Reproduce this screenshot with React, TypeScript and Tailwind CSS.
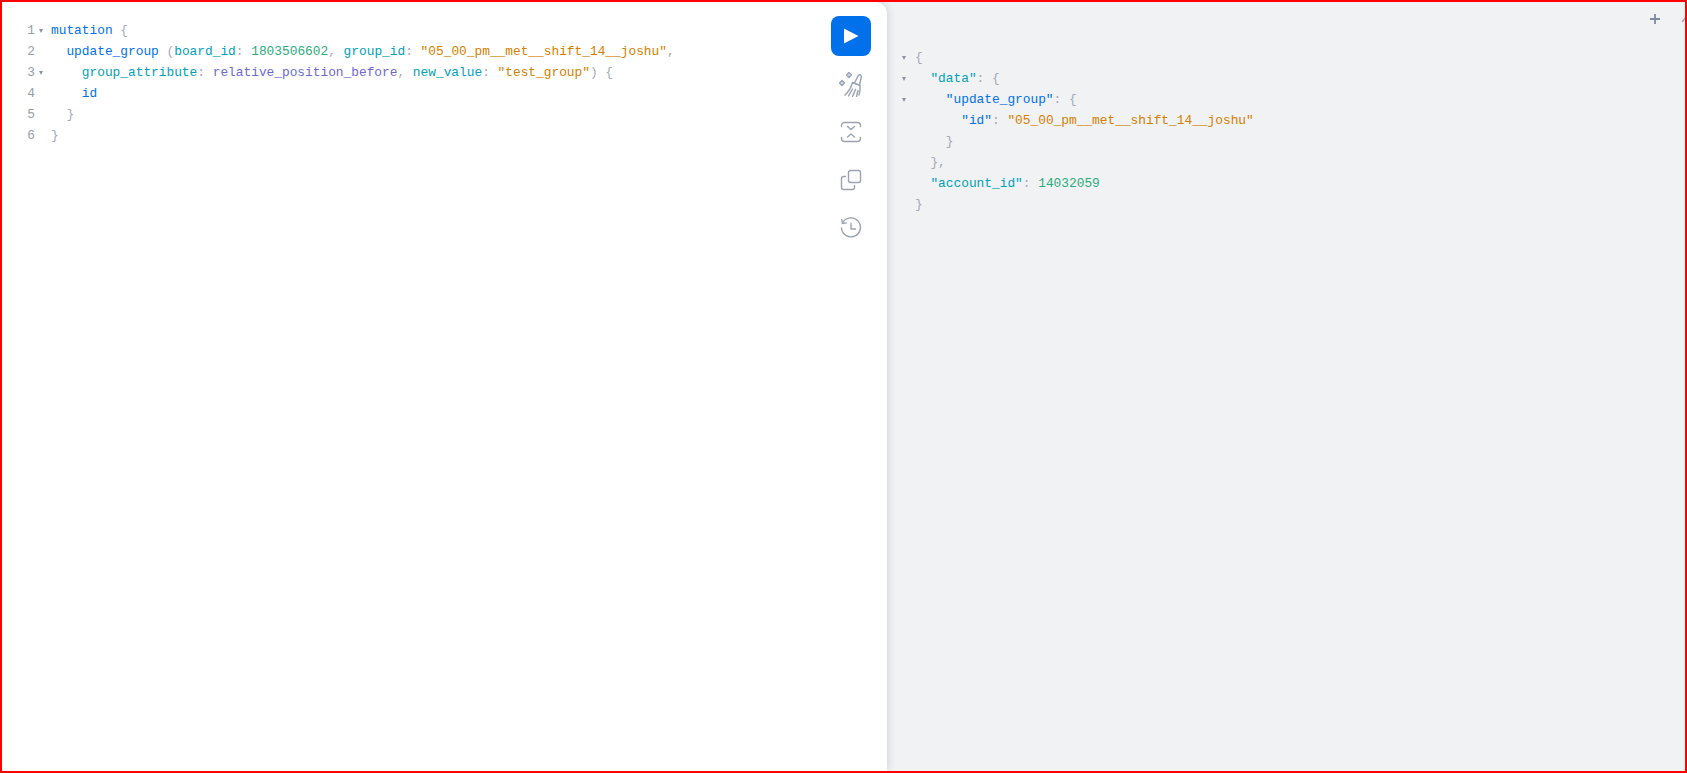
import React from 'react';

const c = {
  kw: 'text-[#0070eb]',
  attr: 'text-[#00a0b8]',
  num: 'text-[#2bab7c]',
  str: 'text-[#d17f00]',
  enum: 'text-[#6c69ce]',
  punct: 'text-[#a3aab8]',
};

type Token = [string, string];

const query: { fold?: boolean; tokens: Token[] }[] = [
  { fold: true, tokens: [['mutation', c.kw], [' ', ''], ['{', c.punct]] },
  {
    tokens: [
      ['  ', ''], ['update_group', c.kw], [' ', ''], ['(', c.punct], ['board_id', c.attr], [': ', c.punct],
      ['1803506602', c.num], [', ', c.punct], ['group_id', c.attr], [': ', c.punct],
      ['"05_00_pm__met__shift_14__joshu"', c.str], [',', c.punct],
    ],
  },
  {
    fold: true,
    tokens: [
      ['    ', ''], ['group_attribute', c.attr], [': ', c.punct], ['relative_position_before', c.enum],
      [', ', c.punct], ['new_value', c.attr], [': ', c.punct], ['"test_group"', c.str], [') {', c.punct],
    ],
  },
  { tokens: [['    ', ''], ['id', c.kw]] },
  { tokens: [['  ', ''], ['}', c.punct]] },
  { tokens: [['}', c.punct]] },
];

const result: { fold?: boolean; tokens: Token[] }[] = [
  { fold: true, tokens: [['{', c.punct]] },
  { fold: true, tokens: [['  ', ''], ['"data"', c.attr], [': ', c.punct], ['{', c.punct]] },
  { fold: true, tokens: [['    ', ''], ['"update_group"', c.kw], [': ', c.punct], ['{', c.punct]] },
  { tokens: [['      ', ''], ['"id"', c.kw], [': ', c.punct], ['"05_00_pm__met__shift_14__joshu"', c.str]] },
  { tokens: [['    ', ''], ['}', c.punct]] },
  { tokens: [['  ', ''], ['},', c.punct]] },
  { tokens: [['  ', ''], ['"account_id"', c.attr], [': ', c.punct], ['14032059', c.num]] },
  { tokens: [['}', c.punct]] },
];

const mono = "font-['Liberation_Mono',monospace] text-[12.83px] leading-[21px] whitespace-pre";

function Fold() {
  return <div className="w-0 h-0 border-x-[2.5px] border-x-transparent border-t-[4px] border-t-[#8b93a3]" />;
}

function Code({ tokens }: { tokens: Token[] }) {
  return (
    <span>
      {tokens.map(([text, color], i) => (
        <span key={i} className={color}>{text}</span>
      ))}
    </span>
  );
}

function ToolButton({ children }: { children: React.ReactNode }) {
  return <div className="w-10 h-10 flex items-center justify-center">{children}</div>;
}

const iconProps = {
  fill: 'none',
  stroke: '#9aa2b1',
  strokeWidth: 1.4,
  strokeLinecap: 'round' as const,
  strokeLinejoin: 'round' as const,
};

export default function App() {
  return (
    <div className="h-screen border-2 border-[#ff0000] bg-[#f0f2f4] flex overflow-hidden">
      <div className="w-[885px] h-full bg-white rounded-tr-xl shadow-[0_0_10px_rgba(59,75,104,0.22)] flex justify-between relative z-10">
        <div className={`${mono} pt-[18px]`}>
          {query.map((line, i) => (
            <div key={i} className="flex h-[21px]">
              <div className="w-[33px] text-right text-[#969dab]">{i + 1}</div>
              <div className="w-[16px] flex items-center justify-center pr-[5px]">{line.fold && <Fold />}</div>
              <Code tokens={line.tokens} />
            </div>
          ))}
        </div>

        <div className="w-10 mr-[16px] mt-[14px] flex flex-col gap-2 shrink-0">
          <div className="w-10 h-10 bg-[#0070eb] rounded-lg flex items-center justify-center">
            <svg width="16" height="16" viewBox="0 0 16 16" fill="#fff">
              <path d="M1 0.5 L15.5 8 L1 15.5 Z" />
            </svg>
          </div>
          <ToolButton>
            <svg width="26" height="26" viewBox="0 0 26 26" {...iconProps}>
              <path d="M16.500 12l3.500-7c.6-1.200 1.500-1.700 2.400-1.200.9.500 1.100 1.500.8 2.600L21.500 14" />
              <path d="M14.500 11.500l7.500 3c.4 3.500 0 6.500-1 9.500M14.500 11.500C13 16.500 10.500 21 7 24" />
              <path d="M10.500 25l4-7M14.500 25.500l3-7M18.500 25.500l1.500-6" />
              <path d="M11 1.500l2.500 2.500L11 6.500 8.500 4zM4 9.500L6.500 12 4 14.500 1.500 12z" fill="#9aa2b1" fillOpacity="0.4" />
            </svg>
          </ToolButton>
          <ToolButton>
            <svg width="22" height="22" viewBox="0 0 22 22" {...iconProps}>
              <path d="M1.500 5.500V4.500a3 3 0 0 1 3-3h13a3 3 0 0 1 3 3v1M1.500 16.500v1a3 3 0 0 0 3 3h13a3 3 0 0 0 3-3v-1" />
              <path d="M7.500 5.500 11 8.500l3.500-3M7.500 16l3.500-3 3.500 3" />
            </svg>
          </ToolButton>
          <ToolButton>
            <svg width="22" height="22" viewBox="0 0 22 22" {...iconProps}>
              <rect x="8.500" y="1.500" width="12" height="12" rx="2" />
              <path d="M5.500 7.500H3.500a2 2 0 0 0-2 2v9a2 2 0 0 0 2 2h9a2 2 0 0 0 2-2v-2" />
            </svg>
          </ToolButton>
          <ToolButton>
            <svg width="22" height="22" viewBox="0 0 22 22" {...iconProps}>
              <path d="M2.800 5.500A9.500 9.500 0 1 1 1.500 11" />
              <path d="M1.800 2.500l.6 4 4-.6" />
              <path d="M11 6.500V12h4.500" />
            </svg>
          </ToolButton>
        </div>
      </div>

      <div className="flex-1 min-w-0 overflow-hidden">
        <div className="h-[45px] pt-[11px] flex justify-end gap-[21px] -mr-[8px]">
          <svg width="10" height="10" viewBox="0 0 10 10" stroke="#7f8aa0" strokeWidth="1.800" className="mt-[1px]">
            <path d="M5 0v10M0 5h10" />
          </svg>
          <svg width="12" height="12" viewBox="0 0 12 12" fill="none" stroke="#a3aab8" strokeWidth="1.500">
            <path d="M1 9l5-6 5 6" />
          </svg>
        </div>
        <div className={mono}>
          {result.map((line, i) => (
            <div key={i} className="flex h-[21px]">
              <div className="w-[28px] flex items-center justify-start pl-[15px]">{line.fold && <Fold />}</div>
              <Code tokens={line.tokens} />
            </div>
          ))}
        </div>
      </div>
    </div>
  );
}
